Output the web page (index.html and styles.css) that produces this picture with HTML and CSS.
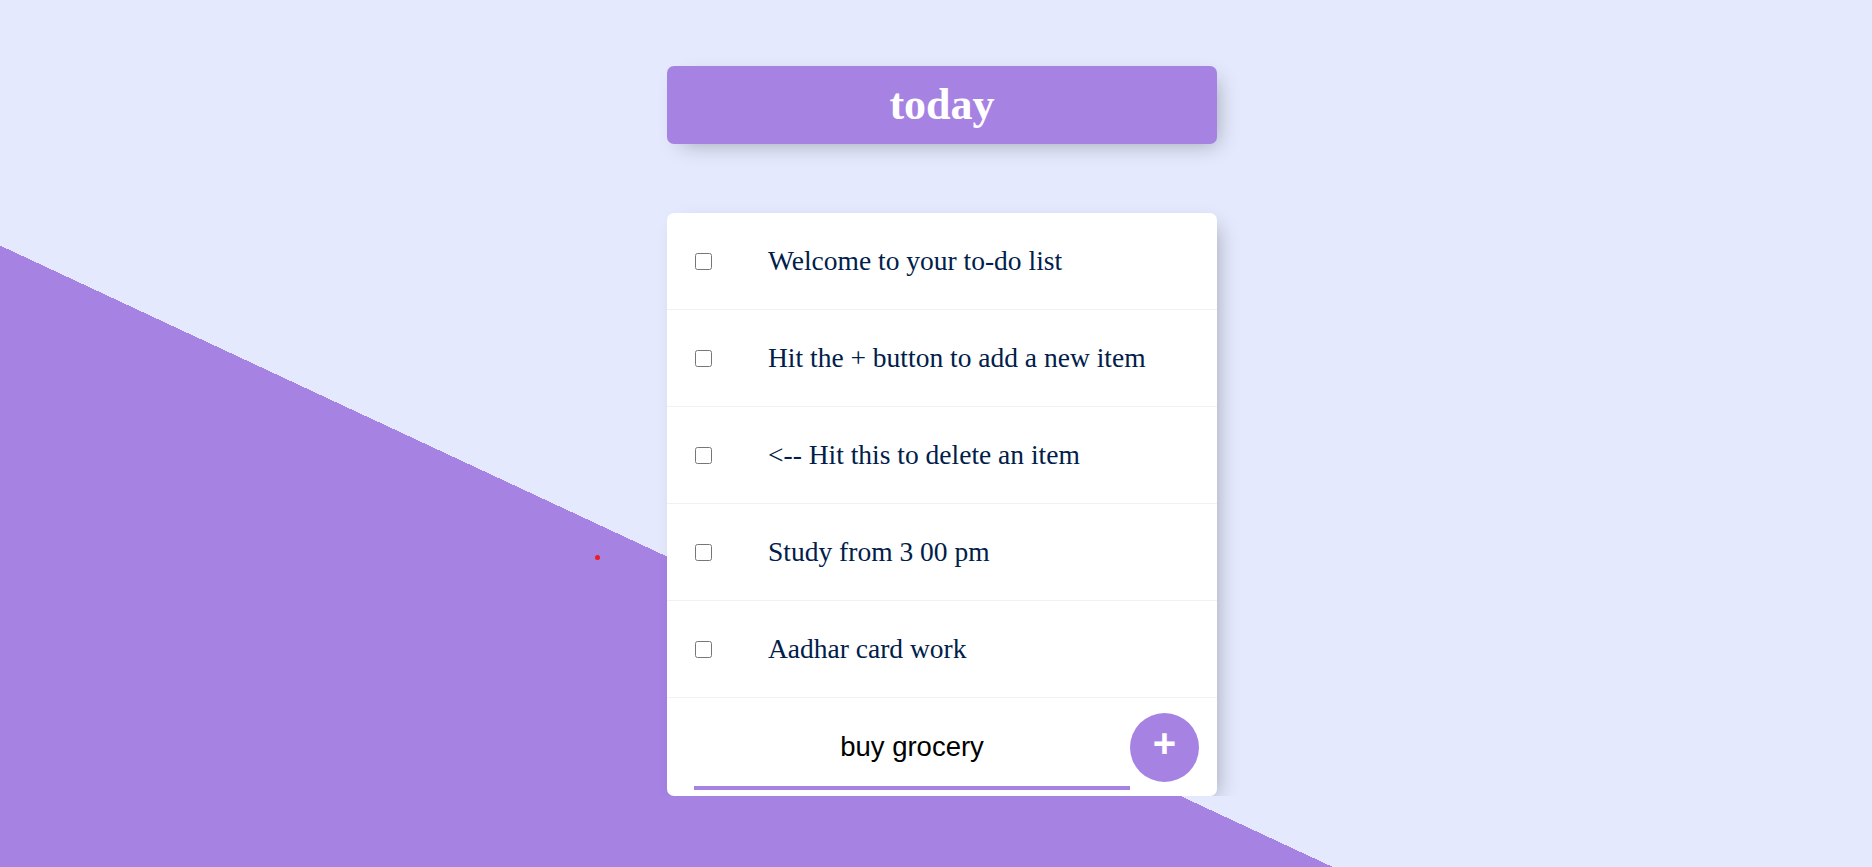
FILE: index.html
```html
<!DOCTYPE html>
<html lang="en">
<head>
<meta charset="utf-8">
<title>To-Do List</title>
<link rel="stylesheet" href="styles.css">
</head>
<body>
  <div class="box heading">
    <h1>today</h1>
  </div>

  <div class="box list">
    <div class="item">
      <input type="checkbox" class="check">
      <p>Welcome to your to-do list</p>
    </div>
    <div class="item">
      <input type="checkbox" class="check">
      <p>Hit the + button to add a new item</p>
    </div>
    <div class="item">
      <input type="checkbox" class="check">
      <p>&lt;-- Hit this to delete an item</p>
    </div>
    <div class="item">
      <input type="checkbox" class="check">
      <p>Study from 3 00 pm</p>
    </div>
    <div class="item">
      <input type="checkbox" class="check">
      <p>Aadhar card work</p>
    </div>
    <form class="item new-item" action="#" onsubmit="return false;">
      <input type="text" class="new-input" name="newItem" value="buy grocery" placeholder="New Item" autocomplete="off">
      <button type="button" class="add-btn">+</button>
    </form>
  </div>

  <span class="dot"></span>
</body>
</html>
```

FILE: styles.css
```css
html {
  height: 100%;
  background-color: #E4E9FD;
  background-image: linear-gradient(25deg, #A683E3 50%, #E4E9FD 50%);
  background-size: 100% 1364px;
  background-repeat: no-repeat;
  background-position: 0 0;
  overflow: hidden;
}

body {
  margin: 0;
  padding-top: 66px;
  font-family: "Liberation Serif", "Times New Roman", serif;
}

.box {
  width: 550px;
  margin-left: calc(50% - 269px);
  background: #ffffff;
  border-radius: 7px;
  box-shadow: 7px 7px 20px -7px rgba(0, 0, 0, 0.3);
}

.heading {
  background-color: #A683E3;
  text-align: center;
}

.heading h1 {
  margin: 0;
  padding: 14px;
  font-size: 44px;
  line-height: 50px;
  font-weight: bold;
  color: #ffffff;
}

.list {
  margin-top: 69px;
}

.item {
  min-height: 96px;
  display: flex;
  align-items: center;
  border-bottom: 1px solid #F1F1F1;
}

.item:last-child {
  border-bottom: 0;
  min-height: 98px;
}

.check {
  width: 17px;
  height: 17px;
  margin: 0 28px;
  flex: none;
}

.item p {
  margin: 0;
  padding: 0 28px;
  font-size: 27.5px;
  font-weight: 200;
  color: #00204a;
}

.new-item {
  padding-left: 27px;
}

.new-input {
  width: 436px;
  height: 86px;
  padding: 0;
  border: none;
  background: transparent;
  text-align: center;
  font-family: "Liberation Sans", Arial, sans-serif;
  font-size: 27.5px;
  color: #000000;
  outline: none;
  box-shadow: inset 0 -4px 0 0 #A683E3;
  box-sizing: border-box;
}

.add-btn {
  width: 69px;
  height: 69px;
  flex: none;
  border-radius: 50%;
  border: 0;
  background-color: #A683E3;
  color: #ffffff;
  font-family: "Liberation Sans", Arial, sans-serif;
  font-size: 40px;
  font-weight: bold;
  line-height: 1;
  padding: 0 0 8px;
  box-sizing: border-box;
  cursor: pointer;
}

.dot {
  position: absolute;
  left: 595px;
  top: 555px;
  width: 5px;
  height: 5px;
  border-radius: 50%;
  background: #ee1c1c;
}
```
